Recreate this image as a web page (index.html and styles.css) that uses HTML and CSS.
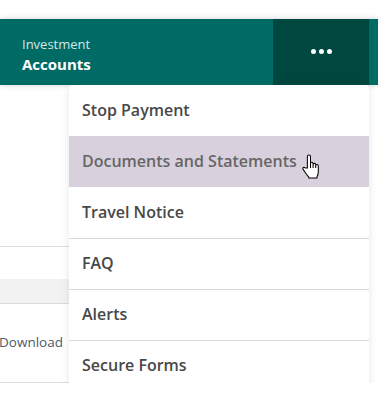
FILE: index.html
```html
<!DOCTYPE html>
<html lang="en">
<head>
    <meta charset="UTF-8">
    <meta name="viewport" content="width=device-width, initial-scale=1.0">
    <title>Investment Accounts</title>
    <link rel="stylesheet" href="styles.css">
</head>
<body>
    <header class="account-bar">
        <div class="account-title">
            <div class="account-type">Investment</div>
            <div class="account-name">Accounts</div>
        </div>
        <button class="more-btn" aria-label="More options">
            <span class="dot"></span><span class="dot"></span><span class="dot"></span>
        </button>
    </header>

    <main class="page">
        <div class="summary"></div>
        <div class="table-head"></div>
        <div class="table-row">
            <a class="download-link" href="#">Download</a>
        </div>

        <ul class="more-menu">
            <li><a href="#">Stop Payment</a></li>
            <li class="hover"><a href="#">Documents and Statements</a>
                <svg class="cursor" width="19" height="25" viewBox="0 0 18 24">
                    <path d="M6 13.5V2.6Q6 1 7.5 1Q9 1 9 2.6V9.2Q9 8 10.3 8Q11.5 8 11.5 9.5V10.2Q11.6 9 12.8 9Q14 9 14 10.5V11.2Q14.2 10 15.3 10Q16.5 10 16.5 11.5V17Q16.5 20 15.2 21.8V23H7.3V22Q6.2 21 4.3 18.2L1.9 14.8Q1.2 13.6 2.1 13Q3 12.4 4.1 13.5Z" fill="#fff" stroke="#000" stroke-width="1" stroke-linejoin="round"/>
                    <path d="M9 9.5V13.5M11.5 10.5V13.5M14 11.5V13.5" stroke="#000" stroke-width="1" fill="none"/>
                </svg>
            </li>
            <li><a href="#">Travel Notice</a></li>
            <li class="sep"><a href="#">FAQ</a></li>
            <li class="sep"><a href="#">Alerts</a></li>
            <li class="sep"><a href="#">Secure Forms</a></li>
        </ul>
    </main>
</body>
</html>
```

FILE: styles.css
```css
* {
    box-sizing: border-box;
}

body {
    font-family: 'Open Sans', 'Noto Sans', sans-serif;
    margin: 0;
    padding: 0;
    background: #fff;
    color: #3d3d3d;
    overflow: hidden;
}

.account-bar {
    margin-top: 19px;
    height: 66px;
    background: #006b64;
    display: flex;
    align-items: stretch;
    box-shadow: 0 0 6px rgba(0,0,0,0.18);
    position: relative;
    z-index: 1;
}

.account-title {
    flex: 1;
    padding: 16px 0 0 22px;
    color: #fff;
}

.account-type {
    font-size: 13px;
    line-height: 18px;
    color: #d3e8e5;
}

.account-name {
    font-size: 15px;
    font-weight: 700;
    line-height: 22px;
}

.more-btn {
    width: 96px;
    margin-right: 9px;
    background: #00473f;
    border: none;
    display: flex;
    justify-content: center;
    align-items: center;
    gap: 3px;
    padding: 0 0 2px;
    cursor: pointer;
}

    .more-btn .dot {
        width: 5px;
        height: 5px;
        border-radius: 50%;
        background: #fff;
    }

.page {
    position: relative;
    width: 300px;
}

.summary {
    height: 162px;
    border-bottom: 1px solid #dcdcdc;
}

.table-head {
    margin-top: 32px;
    height: 25px;
    background: #f2f2f2;
    border-bottom: 1px solid #dcdcdc;
}

.table-row {
    height: 79px;
    border-bottom: 1px solid #dcdcdc;
    display: flex;
    align-items: center;
    padding-bottom: 2px;
}

.download-link {
    margin-left: -1px;
    font-size: 13.5px;
    color: #4a5a6a;
    text-decoration: none;
}

.more-menu {
    position: absolute;
    top: 0;
    left: 69px;
    width: 300px;
    margin: 0;
    padding: 0;
    list-style: none;
    background: #fff;
    border-radius: 4px;
    box-shadow: 0 2px 8px rgba(0,0,0,0.1);
    z-index: 2;
    overflow: hidden;
}

    .more-menu li {
        height: 51px;
        display: flex;
        align-items: center;
        padding: 0 0 2px 13px;
        position: relative;
    }

        .more-menu li.sep {
            border-top: 1px solid #d9d9d9;
            height: 51px;
        }

        .more-menu li:last-child {
            height: 50px;
        }

    .more-menu a {
        font-size: 16px;
        font-weight: 600;
        color: #484848;
        text-decoration: none;
    }

    .more-menu li.hover {
        background: #d8d0dc;
    }

        .more-menu li.hover a {
            color: #666;
        }

.cursor {
    position: absolute;
    left: 232px;
    top: 18px;
}
```
